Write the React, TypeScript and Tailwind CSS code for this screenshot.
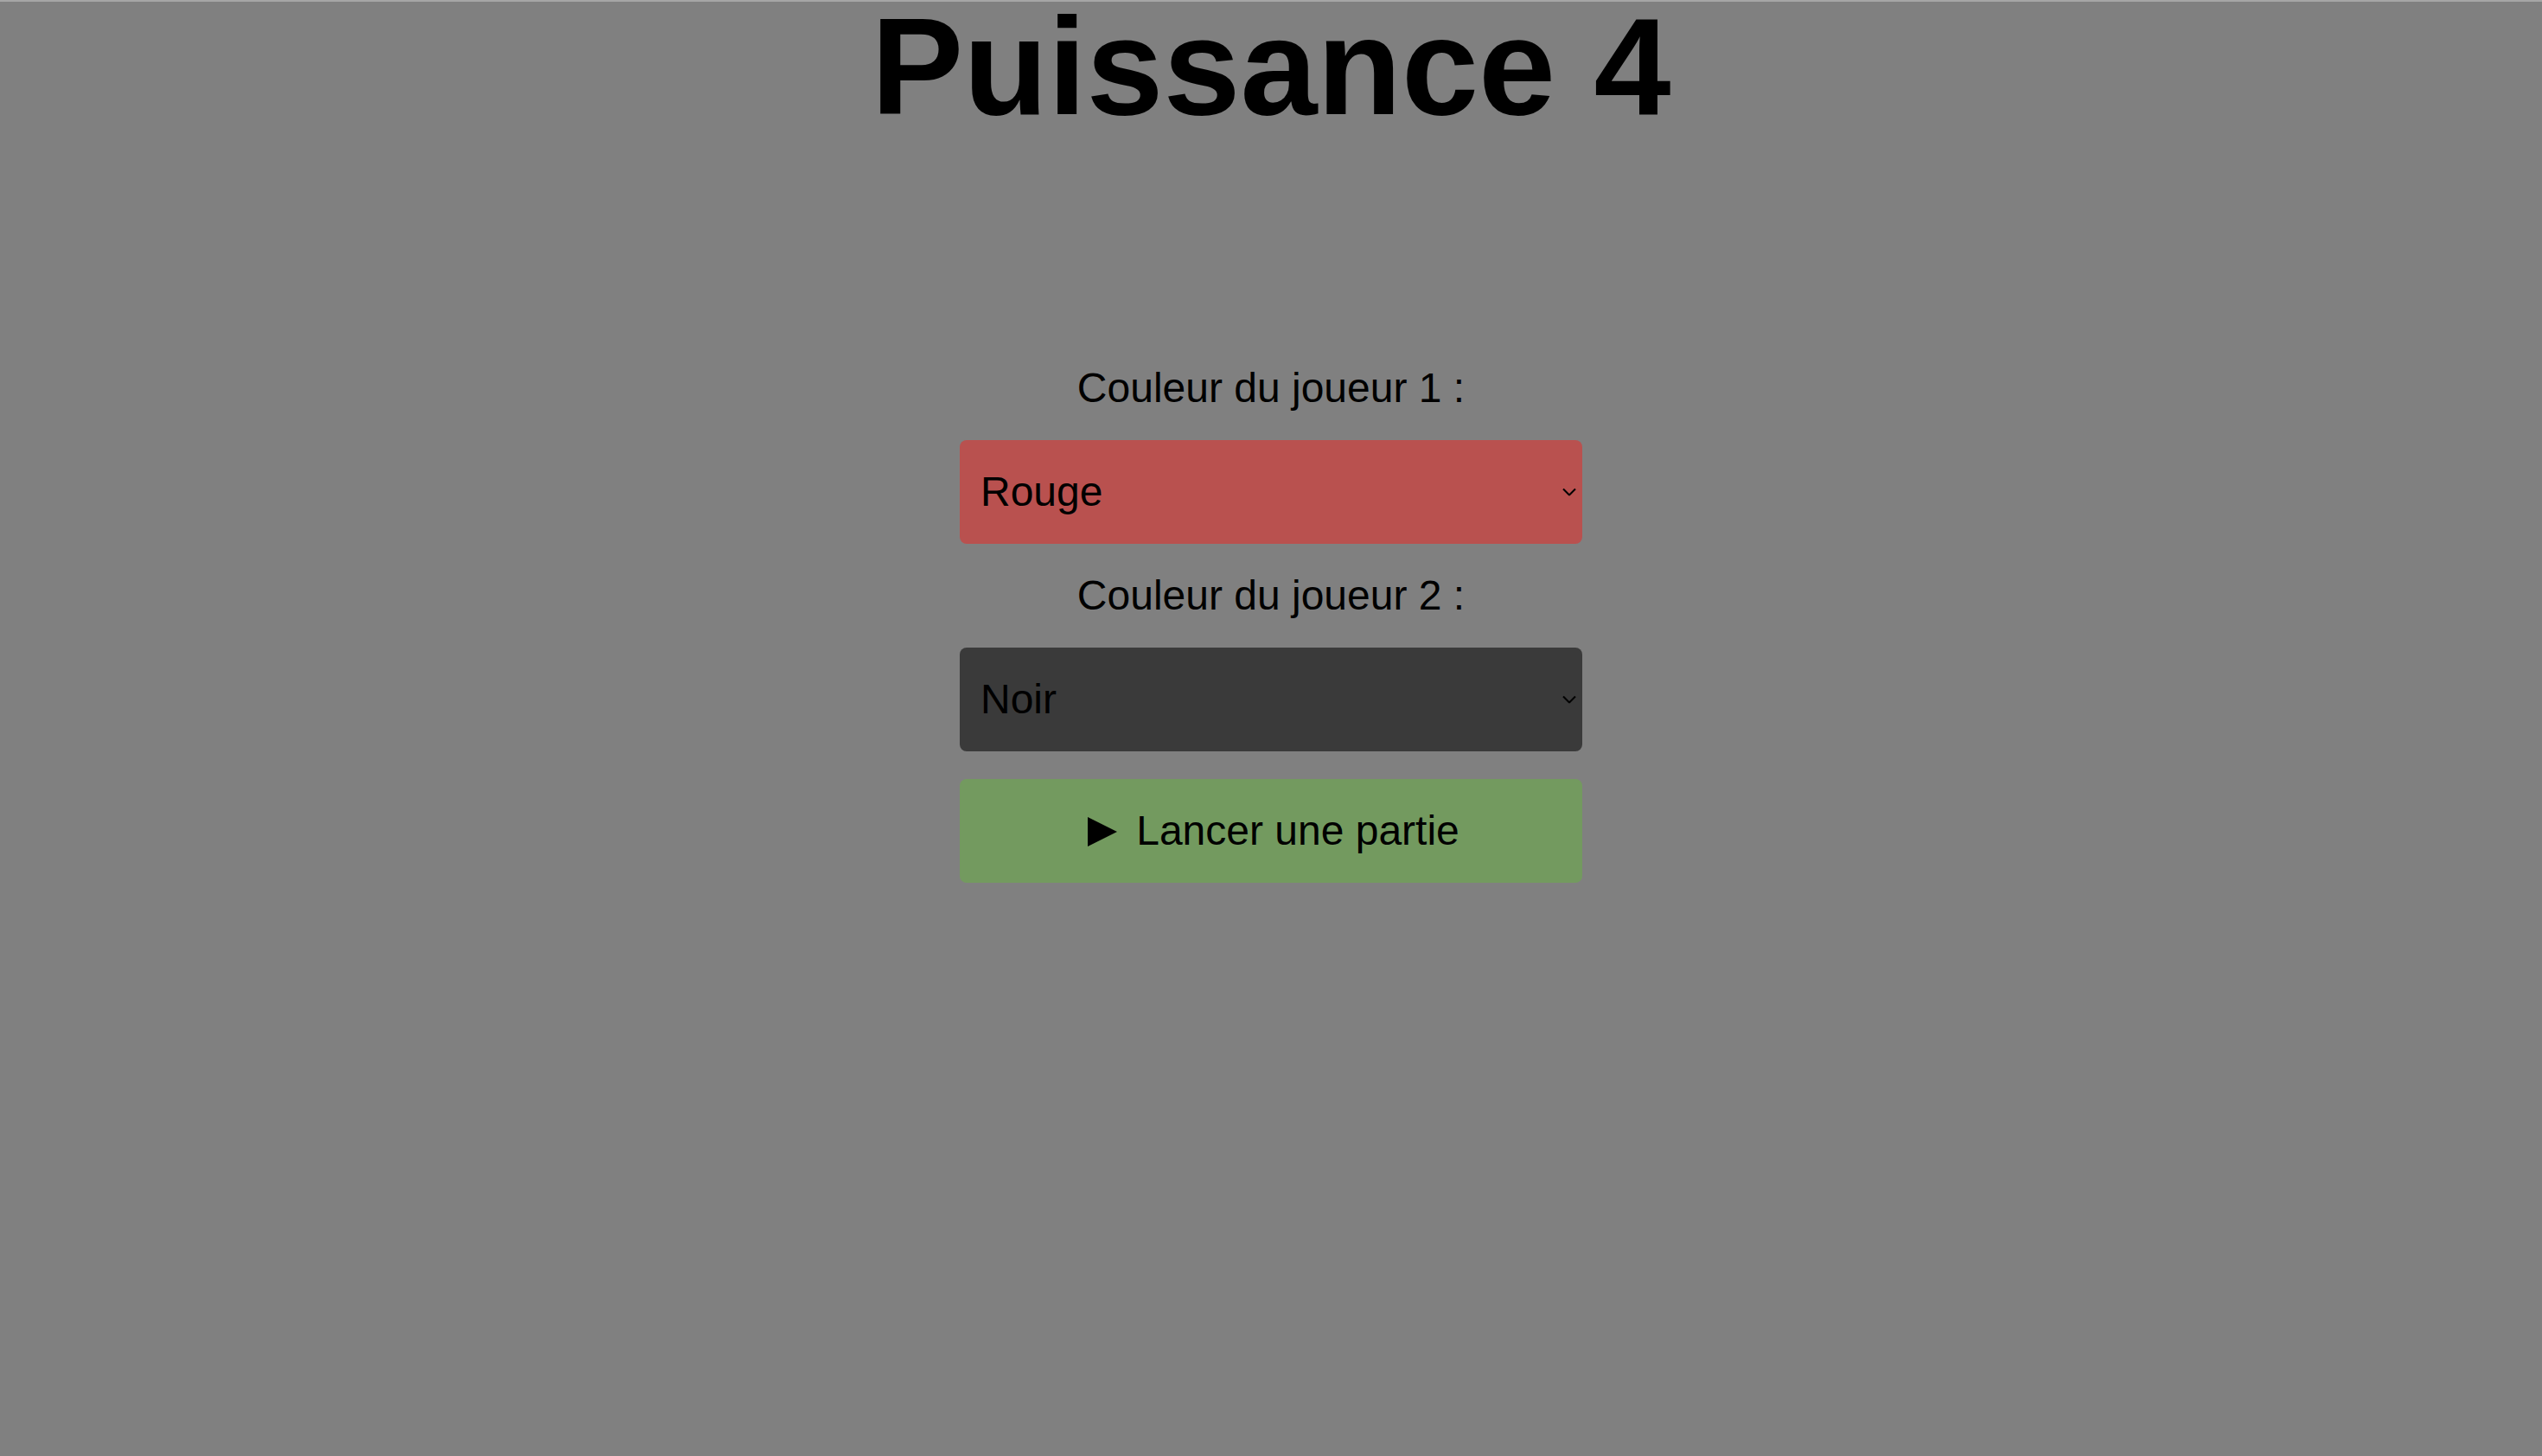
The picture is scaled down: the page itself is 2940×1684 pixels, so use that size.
import React, { useState } from 'react';

const COLOURS = [
  { value: 'rouge', label: 'Rouge', bg: 'bg-[#b9514f]' },
  { value: 'noir', label: 'Noir', bg: 'bg-[#3a3a3a]' },
  { value: 'jaune', label: 'Jaune', bg: 'bg-[#c9b84a]' },
];

const Chevron = () => (
  <svg
    className="pointer-events-none absolute right-[7px] top-1/2 -translate-y-1/2"
    width="16"
    height="9"
    viewBox="0 0 16 9"
    fill="none"
  >
    <path d="M1 1 L8 8 L15 1" stroke="#000" strokeWidth="2" />
  </svg>
);

interface ColourPickerProps {
  player: number;
  value: string;
  onChange: (v: string) => void;
}

const ColourPicker: React.FC<ColourPickerProps> = ({ player, value, onChange }) => {
  const current = COLOURS.find(c => c.value === value) ?? COLOURS[0];
  return (
    <>
      <label className="text-center text-[48px] leading-[56px] text-black">
        Couleur du joueur {player} :
      </label>
      <div className="relative">
        <select
          value={value}
          onChange={e => onChange(e.target.value)}
          className={`h-[120px] w-full appearance-none rounded-lg border-0 pl-[24px] pr-10 text-[48px] text-black outline-none ${current.bg}`}
        >
          {COLOURS.map(c => (
            <option key={c.value} value={c.value}>
              {c.label}
            </option>
          ))}
        </select>
        <Chevron />
      </div>
    </>
  );
};

export default function App() {
  const [p1, setP1] = useState('rouge');
  const [p2, setP2] = useState('noir');

  return (
    <div
      className="flex min-h-screen flex-col items-center border-t-2 border-[#a6a6a6] bg-[#808080]"
      style={{ fontFamily: '"Liberation Sans", Arial, sans-serif' }}
    >
      <h1 className="pt-[2px] text-[160px] font-bold leading-[146px] text-black">Puissance 4</h1>

      <form className="mt-[271px] flex w-[720px] flex-col gap-8" onSubmit={e => e.preventDefault()}>
        <ColourPicker player={1} value={p1} onChange={setP1} />
        <ColourPicker player={2} value={p2} onChange={setP2} />

        <button
          type="submit"
          className="flex h-[120px] w-full items-center justify-center gap-[22px] rounded-lg bg-[#739a5f] pl-[6px] text-[48px] leading-none text-black"
        >
          <svg width="34" height="34" viewBox="0 0 34 34" className="mt-[1px]">
            <polygon points="0,0 34,17 0,34" fill="#000" />
          </svg>
          <span>Lancer une partie</span>
        </button>
      </form>
    </div>
  );
}
